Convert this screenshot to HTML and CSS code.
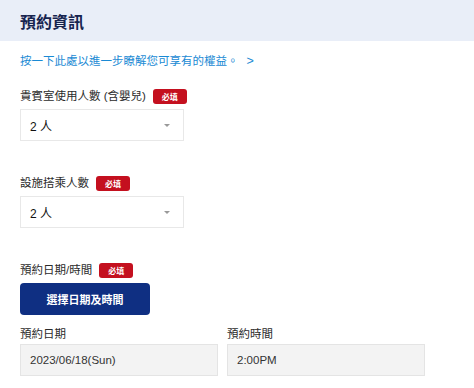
FILE: index.html
```html
<!DOCTYPE html>
<html lang="zh-Hant">
<head>
<meta charset="utf-8">
<link rel="stylesheet" href="styles.css">
</head>
<body>
<header class="hero">
  <h1 class="title">預約資訊</h1>
</header>
<main class="content">
  <a class="benefit" href="#">按一下此處以進一步瞭解您可享有的權益。<span class="chev">&gt;</span></a>

  <div class="field field-first">
    <div class="label-row"><span class="label">貴賓室使用人數 (含嬰兒)</span><span class="badge">必填</span></div>
    <div class="select"><span>2 人</span><span class="caret"></span></div>
  </div>

  <div class="field field-gap">
    <div class="label-row"><span class="label">設施搭乘人數</span><span class="badge">必填</span></div>
    <div class="select"><span>2 人</span><span class="caret"></span></div>
  </div>

  <div class="field field-gap">
    <div class="label-row"><span class="label">預約日期/時間</span><span class="badge">必填</span></div>
    <button class="btn" type="button">選擇日期及時間</button>
  </div>

  <div class="pair">
    <div class="col">
      <div class="label">預約日期</div>
      <div class="readonly">2023/06/18(Sun)</div>
    </div>
    <div class="col">
      <div class="label">預約時間</div>
      <div class="readonly">2:00PM</div>
    </div>
  </div>
</main>
</body>
</html>
```

FILE: styles.css
```css
* { box-sizing: border-box; }
html, body { margin: 0; padding: 0; background: #fff; }
body {
  font-family: "Liberation Sans", Arial, "Noto Sans CJK TC", sans-serif;
  color: #333;
  width: 474px;
  height: 388px;
  overflow: hidden;
}
.hero {
  background: #e9eef8;
  height: 41px;
  padding: 0 20px;
  display: flex;
  align-items: center;
}
.title {
  margin: 0;
  font-size: 16px;
  font-weight: 700;
  color: #16244f;
}
.content { padding: 12px 20px 0; }
.benefit {
  display: block;
  font-size: 11.5px;
  line-height: 16px;
  color: #1a8ad4;
  text-decoration: none;
}
.chev {
  margin-left: 8px;
  font-size: 12.5px;
}
.field-first { margin-top: 19px; }
.field-gap { margin-top: 34px; }
.label-row {
  display: flex;
  align-items: center;
  gap: 7px;
  height: 16px;
}
.label {
  font-size: 11.5px;
  line-height: 16px;
  color: #2b2b2b;
}
.badge {
  background: #c4101f;
  color: #fff;
  font-size: 8px;
  font-weight: 700;
  border-radius: 3px;
  height: 15px;
  width: 34px;
  display: inline-flex;
  align-items: center;
  justify-content: center;
}
.select {
  margin-top: 5px;
  width: 164px;
  height: 32px;
  border: 1px solid #e8e8e8;
  background: #fff;
  display: flex;
  align-items: center;
  justify-content: space-between;
  padding: 0 13px 0 9px;
  font-size: 12px;
  color: #111;
}
.caret {
  width: 0;
  height: 0;
  border-left: 3px solid transparent;
  border-right: 3px solid transparent;
  border-top: 3px solid #999;
}
.btn {
  margin-top: 5px;
  width: 130px;
  height: 32px;
  background: #0f2f82;
  color: #fff;
  border: 0;
  border-radius: 4px;
  font-family: inherit;
  font-size: 11px;
  font-weight: 700;
  display: block;
}
.pair {
  margin-top: 11px;
  display: flex;
  gap: 9px;
}
.col { width: 198px; }
.readonly {
  margin-top: 2px;
  height: 32px;
  background: #f3f3f3;
  border: 1px solid #e4e4e4;
  display: flex;
  align-items: center;
  padding: 0 9px;
  font-size: 11.5px;
  color: #333;
}
```
